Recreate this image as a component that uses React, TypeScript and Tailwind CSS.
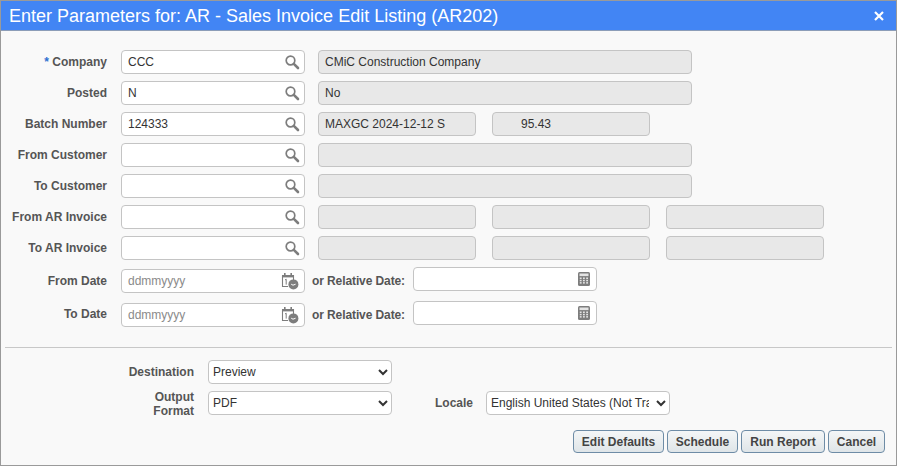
import React from 'react';

const textInput = 'h-[24px] rounded-[4px] border border-[#c4c4c4] bg-white';

const SearchIcon = () => (
  <svg width="16" height="16" viewBox="0 0 16 16" fill="none" className="shrink-0">
    <circle cx="6.5" cy="6.5" r="4.3" stroke="#7d7d7d" strokeWidth="1.7" />
    <path d="M9.8 9.8 L14 14" stroke="#7d7d7d" strokeWidth="2.6" strokeLinecap="round" />
  </svg>
);

const CalendarClockIcon = () => (
  <svg width="18" height="18" viewBox="0 0 18 18" fill="none" className="shrink-0">
    <path d="M1.5 3.5 H12.5 V8 M1.5 3.5 V14.5 H7" stroke="#7d7d7d" strokeWidth="1.1" />
    <rect x="1" y="3" width="12" height="2.4" fill="#7d7d7d" />
    <rect x="3" y="1" width="1.6" height="3" fill="#7d7d7d" />
    <rect x="9.4" y="1" width="1.6" height="3" fill="#7d7d7d" />
    <path d="M4 8 L5.2 7.2 V12.6" stroke="#7d7d7d" strokeWidth="1" />
    <circle cx="12.4" cy="12.4" r="5" fill="#7d7d7d" />
    <path d="M10.2 12.2 L12 13.2 L14.6 12.2" stroke="#fff" strokeWidth="1" />
  </svg>
);

const CalculatorIcon = () => (
  <svg width="12" height="14" viewBox="0 0 12 14" className="shrink-0">
    <rect x="0" y="0" width="12" height="14" rx="1.5" fill="#7d7d7d" />
    <rect x="1.5" y="1.5" width="9" height="2.6" fill="#e4e4e4" />
    {[5.5, 7.8, 10.1].map(y =>
      [1.8, 5, 8.2].map(x => <rect key={`${x}-${y}`} x={x} y={y} width="1.8" height="1.5" fill="#e4e4e4" />)
    )}
  </svg>
);

const Label = ({ children, className = '' }: { children: React.ReactNode; className?: string }) => (
  <label className={`w-[106px] shrink-0 text-right text-[12px] font-bold text-[#555] ${className}`}>{children}</label>
);

const LookupInput = ({ value = '' }: { value?: string }) => (
  <div className={`${textInput} flex w-[184px] shrink-0 items-center pl-[6px] pr-[4px]`}>
    <span className="flex-1 text-[12px] text-[#333]">{value}</span>
    <SearchIcon />
  </div>
);

const ReadOnly = ({ width, value = '', indent }: { width: string; value?: string; indent?: boolean }) => (
  <div className={`${width} h-[24px] shrink-0 rounded-[4px] border border-[#c4c4c4] bg-[#e8e8e8] text-[12px] leading-[22px] text-[#333] ${indent ? 'pl-[28px]' : 'pl-[6px]'}`}>
    {value}
  </div>
);

const LookupRow = ({ label, value, children }: { label: React.ReactNode; value?: string; children: React.ReactNode }) => (
  <div className="flex h-[24px] items-center">
    <Label>{label}</Label>
    <div className="ml-[14px]"><LookupInput value={value} /></div>
    <div className="ml-[13px] flex gap-[16px]">{children}</div>
  </div>
);

const DateRow = ({ label, labelClass = '' }: { label: string; labelClass?: string }) => (
  <div className="flex h-[24px] items-start">
    <div className="mt-[2px] flex h-[24px] items-center">
      <Label className={labelClass}>{label}</Label>
      <div className={`${textInput} ml-[14px] flex w-[184px] items-center pl-[6px] pr-[5px]`}>
        <span className="flex-1 text-[12px] text-[#8a8a8a]">ddmmyyyy</span>
        <CalendarClockIcon />
      </div>
    </div>
    <span className="ml-[7px] mt-[2px] w-[101px] text-[12px] font-bold leading-[24px] tracking-[-0.1px] text-[#555]">or Relative Date:</span>
    <div className={`${textInput} flex w-[184px] items-center justify-end pr-[6px]`}>
      <CalculatorIcon />
    </div>
  </div>
);

const NativeSelect = ({ value, className = '' }: { value: string; className?: string }) => (
  <select
    defaultValue={value}
    className={`h-[24px] w-[184px] rounded-[4px] border border-[#c4c4c4] bg-white pr-[4px] text-[12px] text-[#333] ${className}`}
  >
    <option>{value}</option>
  </select>
);

const Button = ({ children, width }: { children: React.ReactNode; width: string }) => (
  <button className={`${width} h-[23px] rounded-[4px] border border-[#6e8ca6] bg-gradient-to-b from-[#f4f6f7] to-[#dfe5e8] text-[12px] font-bold text-[#444]`}>
    {children}
  </button>
);

export default function App() {
  return (
    <div className="flex h-[466px] w-[897px] flex-col overflow-hidden border border-[#9a9a9a] bg-[#f9f9f9] font-['Liberation_Sans',Arial,sans-serif]">
      <header className="flex h-[30px] shrink-0 items-center justify-between border-b border-[#8c9db8] bg-[#4285f4] pl-[8px] pr-[12px] text-white">
        <h1 className="text-[18px] leading-none">Enter Parameters for: AR - Sales Invoice Edit Listing (AR202)</h1>
        <svg width="10" height="10" viewBox="0 0 10 10">
          <path d="M1 1 L9 9 M9 1 L1 9" stroke="#fff" strokeWidth="2.2" />
        </svg>
      </header>

      <div className="flex flex-col gap-[7px] pt-[19px]">
        <LookupRow label={<><span className="text-[#2f6fd0]">*</span> Company</>} value="CCC">
          <ReadOnly width="w-[374px]" value="CMiC Construction Company" />
        </LookupRow>
        <LookupRow label="Posted" value="N">
          <ReadOnly width="w-[374px]" value="No" />
        </LookupRow>
        <LookupRow label="Batch Number" value="124333">
          <ReadOnly width="w-[158px]" value="MAXGC 2024-12-12 S" />
          <ReadOnly width="w-[158px]" value="95.43" indent />
        </LookupRow>
        <LookupRow label="From Customer">
          <ReadOnly width="w-[374px]" />
        </LookupRow>
        <LookupRow label="To Customer">
          <ReadOnly width="w-[374px]" />
        </LookupRow>
        <LookupRow label="From AR Invoice">
          <ReadOnly width="w-[158px]" />
          <ReadOnly width="w-[158px]" />
          <ReadOnly width="w-[158px]" />
        </LookupRow>
        <LookupRow label="To AR Invoice">
          <ReadOnly width="w-[158px]" />
          <ReadOnly width="w-[158px]" />
          <ReadOnly width="w-[158px]" />
        </LookupRow>
        <DateRow label="From Date" />
        <div className="mt-[3px]"><DateRow label="To Date" labelClass="mb-[2px]" /></div>
      </div>

      <hr className="mx-[4px] mt-[22px] border-t border-[#c8c8c8]" />

      <div className="mt-[12px] flex h-[24px] items-center">
        <label className="w-[193px] text-right text-[12px] font-bold text-[#555]">Destination</label>
        <NativeSelect value="Preview" className="ml-[14px]" />
      </div>
      <div className="mt-[7px] flex h-[24px] items-center">
        <label className="mt-[2px] w-[193px] text-right text-[12px] font-bold leading-[14px] text-[#555]">Output<br />Format</label>
        <NativeSelect value="PDF" className="ml-[14px]" />
        <label className="ml-[43px] text-[12px] font-bold text-[#555]">Locale</label>
        <NativeSelect value="English United States (Not Translated)" className="ml-[13px]" />
      </div>

      <div className="mt-[15px] flex justify-end gap-[3px] pr-[11px]">
        <Button width="w-[91px]">Edit Defaults</Button>
        <Button width="w-[71px]">Schedule</Button>
        <Button width="w-[84px]">Run Report</Button>
        <Button width="w-[57px]">Cancel</Button>
      </div>
    </div>
  );
}
